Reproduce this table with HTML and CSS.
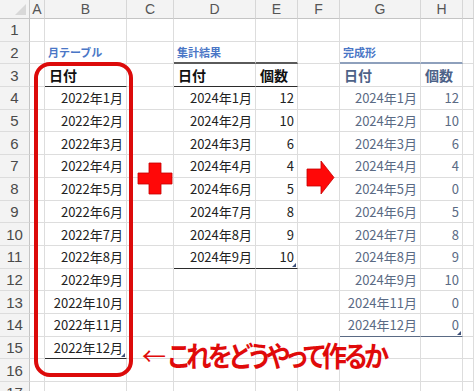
FILE: index.html
```html
<!DOCTYPE html>
<html lang="ja">
<head>
<meta charset="utf-8">
<link rel="stylesheet" href="styles.css">
</head>
<body>
<div class="sheet">
  <div class="grid">
    <div class="corner"></div><div class="ch">A</div><div class="ch">B</div><div class="ch">C</div><div class="ch">D</div><div class="ch">E</div><div class="ch">F</div><div class="ch">G</div><div class="ch">H</div><div class="ch"></div>

    <div class="rh">1</div><div class="c"></div><div class="c"></div><div class="c"></div><div class="c"></div><div class="c"></div><div class="c"></div><div class="c"></div><div class="c"></div><div class="c"></div>

    <div class="rh">2</div><div class="c"></div><div class="c title">月テーブル</div><div class="c"></div><div class="c title d-top">集計結果</div><div class="c d-top"></div><div class="c"></div><div class="c title g-top">完成形</div><div class="c g-top"></div><div class="c"></div>

    <div class="rh">3</div><div class="c"></div><div class="c hd line-dark">日付</div><div class="c"></div><div class="c hd line-dark">日付</div><div class="c hd line-dark">個数</div><div class="c"></div><div class="c hd g-hd">日付</div><div class="c hd g-hd">個数</div><div class="c"></div>

    <div class="rh">4</div><div class="c"></div><div class="c num">2022年1月</div><div class="c"></div><div class="c num">2024年1月</div><div class="c num">12</div><div class="c"></div><div class="c num g">2024年1月</div><div class="c num g">12</div><div class="c"></div>

    <div class="rh">5</div><div class="c"></div><div class="c num">2022年2月</div><div class="c"></div><div class="c num">2024年2月</div><div class="c num">10</div><div class="c"></div><div class="c num g">2024年2月</div><div class="c num g">10</div><div class="c"></div>

    <div class="rh">6</div><div class="c"></div><div class="c num">2022年3月</div><div class="c"></div><div class="c num">2024年3月</div><div class="c num">6</div><div class="c"></div><div class="c num g">2024年3月</div><div class="c num g">6</div><div class="c"></div>

    <div class="rh">7</div><div class="c"></div><div class="c num">2022年4月</div><div class="c"></div><div class="c num">2024年4月</div><div class="c num">4</div><div class="c"></div><div class="c num g">2024年4月</div><div class="c num g">4</div><div class="c"></div>

    <div class="rh">8</div><div class="c"></div><div class="c num">2022年5月</div><div class="c"></div><div class="c num">2024年6月</div><div class="c num">5</div><div class="c"></div><div class="c num g">2024年5月</div><div class="c num g">0</div><div class="c"></div>

    <div class="rh">9</div><div class="c"></div><div class="c num">2022年6月</div><div class="c"></div><div class="c num">2024年7月</div><div class="c num">8</div><div class="c"></div><div class="c num g">2024年6月</div><div class="c num g">5</div><div class="c"></div>

    <div class="rh">10</div><div class="c"></div><div class="c num">2022年7月</div><div class="c"></div><div class="c num">2024年8月</div><div class="c num">9</div><div class="c"></div><div class="c num g">2024年7月</div><div class="c num g">8</div><div class="c"></div>

    <div class="rh">11</div><div class="c"></div><div class="c num">2022年8月</div><div class="c"></div><div class="c num line-dark">2024年9月</div><div class="c num line-dark mark">10</div><div class="c"></div><div class="c num g">2024年8月</div><div class="c num g">9</div><div class="c"></div>

    <div class="rh">12</div><div class="c"></div><div class="c num">2022年9月</div><div class="c"></div><div class="c"></div><div class="c"></div><div class="c"></div><div class="c num g">2024年9月</div><div class="c num g">10</div><div class="c"></div>

    <div class="rh">13</div><div class="c"></div><div class="c num">2022年10月</div><div class="c"></div><div class="c"></div><div class="c"></div><div class="c"></div><div class="c num g">2024年11月</div><div class="c num g">0</div><div class="c"></div>

    <div class="rh">14</div><div class="c"></div><div class="c num">2022年11月</div><div class="c"></div><div class="c"></div><div class="c"></div><div class="c"></div><div class="c num g line-g">2024年12月</div><div class="c num g line-g mark">0</div><div class="c"></div>

    <div class="rh">15</div><div class="c"></div><div class="c num line-dark mark">2022年12月</div><div class="c"></div><div class="c"></div><div class="c"></div><div class="c"></div><div class="c"></div><div class="c"></div><div class="c"></div>

    <div class="rh">16</div><div class="c"></div><div class="c"></div><div class="c"></div><div class="c"></div><div class="c"></div><div class="c"></div><div class="c"></div><div class="c"></div><div class="c"></div>

    <div class="rh">17</div><div class="c"></div><div class="c"></div><div class="c"></div><div class="c"></div><div class="c"></div><div class="c"></div><div class="c"></div><div class="c"></div><div class="c"></div>
  </div>

  <svg class="marks" width="474" height="391" viewBox="0 0 474 391" aria-hidden="true">
    <rect x="36" y="64" width="95" height="311" rx="14" ry="14" fill="none" stroke="#dc0a0a" stroke-width="4"/>
    <polygon points="149,163 161,163 161,173 172,173 172,184 161,184 161,194 149,194 149,184 138,184 138,173 149,173" fill="#ff0808" stroke="#c40000" stroke-width="0.8"/>
    <polygon points="307,169 321,169 321,161 334,177.5 321,194 321,186 307,186" fill="#ff0808" stroke="#c40000" stroke-width="0.8"/>
  </svg>

  <div class="note"><span class="arrow">←</span><span class="msg">これをどうやって作るか</span></div>
</div>
</body>
</html>
```

FILE: styles.css
```css
html, body {
  margin: 0;
  padding: 0;
  background: #ffffff;
  overflow: hidden;
}

.sheet {
  position: relative;
  width: 474px;
  height: 391px;
  overflow: hidden;
  font-family: "Noto Sans CJK JP", "Noto Sans", sans-serif;
  color: #222222;
}

.grid {
  display: grid;
  grid-template-columns: 30px 15px 82px 47px 82px 42px 42px 81px 42px 1fr;
  grid-template-rows: 19px repeat(17, 22.7px);
}

.corner {
  position: relative;
  background: #f3f3f3;
  border-right: 1px solid #c8c8c8;
  border-bottom: 1px solid #c8c8c8;
  box-sizing: border-box;
}

.corner::after {
  content: "";
  position: absolute;
  right: 3px;
  bottom: 3px;
  width: 0;
  height: 0;
  border-left: 11px solid transparent;
  border-bottom: 11px solid #d8d8d8;
}

.ch {
  background: #f3f3f3;
  border-right: 1px solid #d6d6d6;
  border-bottom: 1px solid #c4c4c4;
  box-sizing: border-box;
  display: flex;
  align-items: center;
  justify-content: center;
  font-family: "Liberation Sans", "Noto Sans", sans-serif;
  font-size: 14px;
  color: #555555;
}

.rh {
  background: #f3f3f3;
  border-right: 1px solid #c4c4c4;
  border-bottom: 1px solid #dcdcdc;
  box-sizing: border-box;
  display: flex;
  align-items: center;
  justify-content: center;
  font-family: "Liberation Sans", "Noto Sans", sans-serif;
  font-size: 15px;
  color: #4a4a4a;
}

.c {
  position: relative;
  box-sizing: border-box;
  border-right: 1px solid #dddddd;
  border-bottom: 1px solid #dddddd;
  display: flex;
  align-items: center;
  padding: 0 3px;
  font-size: 13px;
  white-space: nowrap;
  line-height: 1;
}

.num {
  justify-content: flex-end;
  padding-right: 3px;
}

.title {
  font-size: 11px;
  font-weight: 700;
  color: #4a76c6;
  padding-left: 3px;
}

.hd {
  font-size: 14px;
  font-weight: 700;
  color: #111111;
  padding-left: 4px;
}

.d-top {
  border-bottom: 2px solid #5a5a5a;
}

.g-top {
  border-bottom: 2px solid #8ea0bc;
}

.line-dark {
  border-bottom: 1px solid #2b2b2b;
}

.g-hd {
  color: #4d6288;
}

.g {
  color: #5a6a84;
}

.line-g {
  border-bottom: 1px solid #5a6a84;
}

.mark::after {
  content: "";
  position: absolute;
  right: 1px;
  bottom: 1px;
  width: 0;
  height: 0;
  border-left: 4px solid transparent;
  border-bottom: 4px solid #3c4f78;
}

.marks {
  position: absolute;
  left: 0;
  top: 0;
  pointer-events: none;
}

.note {
  position: absolute;
  left: 142px;
  top: 335px;
  display: flex;
  align-items: center;
  color: #e00a0a;
  white-space: nowrap;
  line-height: 40px;
}

.arrow {
  font-weight: 400;
  font-size: 24px;
  margin-right: 2px;
}

.msg {
  display: inline-block;
  font-size: 28px;
  font-weight: 700;
  font-feature-settings: "palt";
  letter-spacing: -3.5px;
  transform: scaleX(0.9);
  transform-origin: left center;
}
```
